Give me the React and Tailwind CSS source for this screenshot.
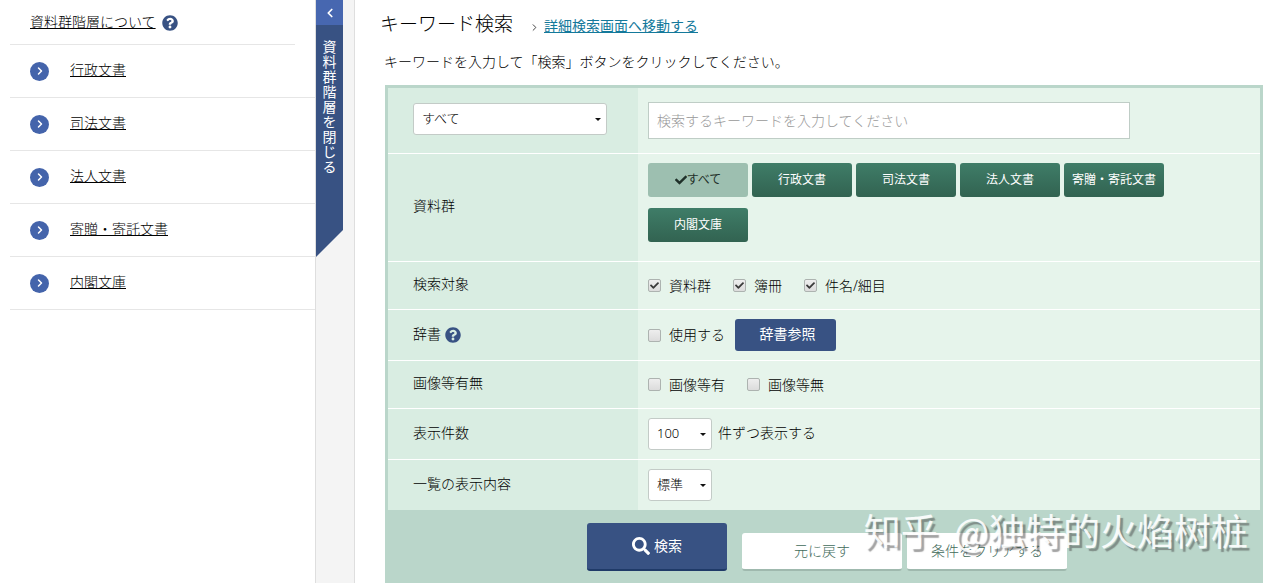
import React, { useState } from 'react'
import { ChevronLeft, ChevronRight } from 'lucide-react'
import { FaCheck, FaQuestionCircle, FaSearch } from 'react-icons/fa'

const groups = ['行政文書', '司法文書', '法人文書', '寄贈・寄託文書', '内閣文庫']

const Checkbox = ({ label, defaultChecked = false }) => (
  <label className="flex items-center gap-2">
    <span className="grid w-[13px] h-[13px]">
      <input
        type="checkbox"
        defaultChecked={defaultChecked}
        className="peer col-start-1 row-start-1 w-[13px] h-[13px] appearance-none rounded-xs border border-[#adb3b0] bg-linear-to-b from-[#eeeeee] to-[#dcdcdc]"
      />
      <FaCheck className="pointer-events-none col-start-1 row-start-1 m-auto hidden w-[9px] h-[9px] text-[#3a3a3a] peer-checked:block" />
    </span>
    <span>{label}</span>
  </label>
)

const Select = ({ id, label, options, className }) => (
  <div className={`relative ${className}`}>
    <select
      id={id}
      aria-label={label}
      className="block w-full h-8 appearance-none rounded-[3px] border border-[#c3cbc7] bg-white pb-[2px] pl-2 pr-4 text-[13px] text-black"
    >
      {options.map((option) => (
        <option key={option}>{option}</option>
      ))}
    </select>
    <svg viewBox="0 0 6 3" className="pointer-events-none absolute right-[6px] top-[15px] w-[6px] h-[3px]">
      <path d="M0 0h6L3 3z" fill="#111" />
    </svg>
  </div>
)

const Row = ({ label, children, className = 'min-h-12' }) => (
  <div className={`flex border-b border-white last:border-b-0 ${className}`}>
    <div className="flex w-[250px] shrink-0 items-center bg-[#d9ede2] pb-[3px] pl-[25px]">{label}</div>
    <div className="flex flex-1 items-center bg-[#e6f4eb] pl-[10px]">{children}</div>
  </div>
)

const Sidebar = () => (
  <nav className="w-[315px] shrink-0 pl-[10px]">
    <div className="mr-5 flex h-[45px] items-center gap-[6px] border-b border-[#e6e6e6] pl-5">
      <a href="#about" className="underline underline-offset-1">資料群階層について</a>
      <FaQuestionCircle className="mt-[2px] w-4 h-4 text-[#385283]" />
    </div>
    <ul>
      {groups.map((name) => (
        <li key={name} className="flex h-[53px] items-center border-b border-[#e6e6e6] pl-5">
          <span className="flex w-[19px] h-[19px] items-center justify-center rounded-full bg-[#4464ab] text-white">
            <ChevronRight className="w-3 h-3" strokeWidth={3} />
          </span>
          <a href="#group" className="ml-[21px] pb-[2px] underline underline-offset-1">{name}</a>
        </li>
      ))}
    </ul>
  </nav>
)

const SidebarToggle = () => (
  <div className="w-10 shrink-0 border-x border-[#dedede] bg-[#f4f4f4]">
    <button
      type="button"
      className="flex w-[27px] h-[257px] flex-col items-center bg-[#385283] font-normal text-white [clip-path:polygon(0_0,100%_0,100%_230px,0_100%)]"
    >
      <span className="flex w-full h-[25px] items-center justify-center bg-[#4767b0]">
        <ChevronLeft className="w-[14px] h-[14px]" strokeWidth={3} />
      </span>
      <span className="mt-[14px] w-[14px] break-all text-[14px] leading-[15px]">資料群階層を閉じる</span>
    </button>
  </div>
)

const GroupButtons = () => {
  const [selected, setSelected] = useState('すべて')

  return (
    <div className="flex flex-wrap gap-x-1 gap-y-[11px] pb-[10px] pr-[90px]">
      {['すべて', ...groups].map((name) => (
        <button
          key={name}
          type="button"
          onClick={() => setSelected(name)}
          className={`flex w-[100px] h-[34px] items-center justify-center rounded-[3px] text-[12px] font-normal ${
            selected === name
              ? 'bg-[#9dbfb0] text-[#1f3029]'
              : 'bg-linear-to-b from-[#3f7d68] to-[#326351] text-white'
          }`}
        >
          {selected === name && <FaCheck className="w-3 h-3" />}
          {name}
        </button>
      ))}
    </div>
  )
}

export default function App() {
  return (
    <div
      lang="ja"
      className="relative flex min-h-screen bg-white font-['Noto_Sans','Noto_Sans_CJK_JP',sans-serif] text-[14px] leading-5 font-light text-black"
    >
      <Sidebar />
      <SidebarToggle />

      <main className="flex min-w-0 flex-1 flex-col pl-[25px] pr-[18px] pt-[10px]">
        <div className="flex items-center">
          <h1 className="text-[19px] leading-7">キーワード検索</h1>
          <ChevronRight className="ml-4 mt-[6px] w-[11px] h-[11px] text-[#333]" />
          <a href="#detail" className="ml-1 mt-1 font-normal text-[#14799b] underline underline-offset-1">
            詳細検索画面へ移動する
          </a>
        </div>
        <p className="mt-[14px] pl-1">キーワードを入力して「検索」ボタンをクリックしてください。</p>

        <form
          className="ml-[5px] mt-[13px] flex flex-1 flex-col border-x-3 border-t-3 border-[#bad6ca] bg-[#bad6ca]"
          onSubmit={(e) => e.preventDefault()}
        >
          <div>
            <Row
              className="min-h-[66px]"
              label={<Select id="field" label="検索項目" options={['すべて']} className="w-[194px]" />}
            >
              <input
                type="text"
                aria-label="キーワード"
                placeholder="検索するキーワードを入力してください"
                className="w-[482px] h-[37px] border border-[#bfcdc6] bg-white px-2 placeholder:text-[#999]"
              />
            </Row>
            <Row className="min-h-[108px]" label="資料群">
              <GroupButtons />
            </Row>
            <Row label="検索対象">
              <div className="flex gap-[22px]">
                <Checkbox label="資料群" defaultChecked />
                <Checkbox label="簿冊" defaultChecked />
                <Checkbox label="件名/細目" defaultChecked />
              </div>
            </Row>
            <Row
              className="min-h-[51px]"
              label={
                <span className="flex items-center gap-1">
                  辞書
                  <FaQuestionCircle className="mt-[2px] w-4 h-4 text-[#385283]" />
                </span>
              }
            >
              <Checkbox label="使用する" />
              <button type="button" className="ml-[10px] w-[101px] h-8 rounded-[3px] bg-[#385283] pb-[2px] pl-1 font-normal text-white">
                辞書参照
              </button>
            </Row>
            <Row label="画像等有無">
              <div className="flex gap-[22px]">
                <Checkbox label="画像等有" />
                <Checkbox label="画像等無" />
              </div>
            </Row>
            <Row className="min-h-[51px]" label={<label htmlFor="count">表示件数</label>}>
              <Select id="count" label="表示件数" options={['100']} className="w-16" />
              <span className="ml-[6px] pb-[2px]">件ずつ表示する</span>
            </Row>
            <Row className="min-h-[50px]" label={<label htmlFor="view">一覧の表示内容</label>}>
              <Select id="view" label="一覧の表示内容" options={['標準']} className="w-16" />
            </Row>
          </div>

          <div className="flex items-end justify-center pb-3 pl-[6px] pt-[13px]">
            <button
              type="submit"
              className="flex w-[140px] h-12 items-center justify-center gap-1 rounded-[3px] border-b-2 border-[#1f3a68] bg-[#385283] font-normal text-white"
            >
              <FaSearch className="w-[18px] h-[18px]" />
              検索
            </button>
            <button type="reset" className="ml-[15px] w-40 h-[38px] rounded-[3px] border-b-2 border-[#9fb9ae] bg-white text-[#3f6b5b]">
              元に戻す
            </button>
            <button type="button" className="ml-[5px] w-40 h-[38px] rounded-[3px] border-b-2 border-[#9fb9ae] bg-white text-[#3f6b5b]">
              条件をクリアする
            </button>
          </div>
        </form>
      </main>

      <div
        lang="zh-CN"
        className="pointer-events-none absolute bottom-[26px] right-[33px] font-['Noto_Sans_CJK_SC',sans-serif] text-[37px] leading-[54px] font-normal text-white/90 [text-shadow:3px_3px_1px_rgba(70,70,70,0.5)]"
      >
        <span className="mr-2">知乎</span> @独特的火焰树桩
      </div>
    </div>
  )
}
